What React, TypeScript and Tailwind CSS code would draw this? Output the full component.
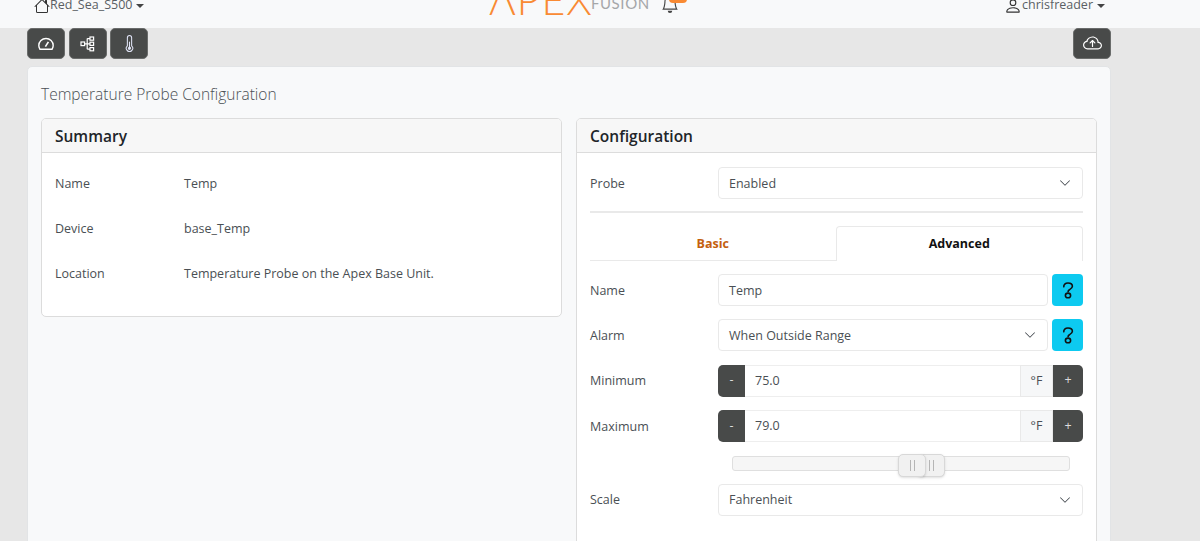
import React from 'react'
import { BsBell, BsChevronDown, BsCloudArrowUp, BsHouse, BsPerson, BsThermometerHalf } from 'react-icons/bs'

const font = { fontFamily: '"Open Sans", sans-serif' }

const DarkButton = ({ children }: { children: React.ReactNode }) => (
  <button className="flex h-[31px] w-[38px] items-center justify-center rounded-[5px] border border-[#6a6c6b] bg-[#484a49] text-white">
    {children}
  </button>
)

const Caret = () => <span className="ml-[4px] inline-block border-x-[4px] border-t-[4px] border-x-transparent border-t-[#444]" />

// dome gauge
const GaugeIcon = () => (
  <svg width="16" height="14" viewBox="0 0 16 14" fill="none" stroke="currentColor" strokeWidth="1.4">
    <path d="M2 12.3 C1.2 11 .8 9.8 .8 8.6 C.8 4.6 4 1.5 8 1.5 C12 1.5 15.2 4.6 15.2 8.6 C15.2 9.8 14.8 11 14 12.3 Z" strokeLinejoin="round" />
    <path d="M7.4 9.6 L10.4 4.8" strokeWidth="1.6" />
  </svg>
)

const TreeIcon = () => (
  <svg width="15" height="16" viewBox="0 0 15 16" fill="none" stroke="currentColor" strokeWidth="1.2">
    <rect x="1" y="6" width="3.6" height="3.6" />
    <rect x="10" y="1" width="3.6" height="3.2" />
    <rect x="10" y="6.2" width="3.6" height="3.2" />
    <rect x="10" y="11.6" width="3.6" height="3.2" />
    <path d="M4.6 7.8 H10 M7.2 2.6 V13.2 M7.2 2.6 H10 M7.2 13.2 H10" />
  </svg>
)

const HelpButton = () => (
  <button className="flex h-[32px] w-[31px] shrink-0 items-center justify-center rounded-[4px] bg-[#0dcaf0] text-[#111]">
    <svg width="12" height="17" viewBox="0 0 12 17" fill="none" stroke="currentColor" strokeWidth="1.6">
      <path d="M1.8 5.4 C1.4 2.4 3.4 1 6 1 C8.6 1 10.4 2.3 10.4 4.3 C10.4 6.2 8.8 7 7.4 7.8 C6.5 8.3 6 9 6 10.2" />
      <ellipse cx="6" cy="13.4" rx="2.6" ry="2.3" />
    </svg>
  </button>
)

const Select = ({ value, className }: { value: string; className?: string }) => (
  <div className={`flex h-[32px] items-center justify-between rounded-[4px] border border-[#e9e9e9] bg-white pl-[10px] pr-[11px] text-[12.5px] text-[#4a4f54] ${className ?? ''}`}>
    <span className="pt-[2px]">{value}</span>
    <BsChevronDown className="text-[12px] text-[#343a40]" />
  </div>
)

const Row = ({ label, children }: { label: string; children: React.ReactNode }) => (
  <div className="flex h-[32px] items-center">
    <span className="w-[128px] shrink-0 pt-[2px] text-[12.5px] text-[#4a4f54]">{label}</span>
    <div className="flex min-w-0 flex-1 gap-[4px]">{children}</div>
  </div>
)

const Stepper = ({ value }: { value: string }) => (
  <div className="flex h-[32px] flex-1 text-[12.5px] text-[#4a4f54]">
    <span className="flex w-[27px] items-center justify-center rounded-l-[5px] bg-[#484a49] text-[#ddd]">-</span>
    <span className="flex flex-1 items-center border-y border-[#eeeeee] bg-white pl-[10px] pt-px">{value}</span>
    <span className="flex w-[33px] items-center justify-center border border-[#e9e9e9] bg-[#f6f7f8] pt-px">°F</span>
    <span className="flex w-[30px] items-center justify-center rounded-r-[5px] bg-[#484a49] text-[#ddd]">+</span>
  </div>
)

const SummaryRow = ({ label, value }: { label: string; value: string }) => (
  <div className="flex h-[45px] items-center pt-[2px] text-[12.5px] text-[#4a4f54]">
    <span className="w-[129px] shrink-0">{label}</span>
    <span>{value}</span>
  </div>
)

const CardHeader = ({ title }: { title: string }) => (
  <div className="flex h-[34px] items-center border-b border-[#dcdcdc] bg-[#f7f7f7] px-[13px] pt-[2px] text-[15.5px] font-semibold text-[#212529]">
    {title}
  </div>
)

const SliderHandle = ({ className }: { className: string }) => (
  <span className={`absolute top-[-3px] flex h-[23px] w-[28px] items-center justify-center gap-[3px] rounded-[5px] border border-[#d8d8d8] bg-[#f1f1f1] shadow ${className}`}>
    <i className="h-[11px] w-px bg-[#b5b5b5]" />
    <i className="h-[11px] w-px bg-[#b5b5b5]" />
  </span>
)

export default function App() {
  return (
    <div className="h-[541px] w-[1200px] overflow-hidden bg-[#e7e7e7]" style={font}>
      <nav className="relative flex h-[28px] items-end overflow-hidden bg-[#f8f9fa] pb-[13px] text-[12.5px] text-[#5a5f64]">
        <div className="ml-[34px] flex items-center">
          <BsHouse className="text-[16px] text-[#333]" />
          <span>Red_Sea_S500</span>
          <Caret />
        </div>
        <div className="ml-auto mr-[95px] flex items-center">
          <BsPerson className="text-[18px] text-[#333]" />
          <span>chrisfreader</span>
          <Caret />
        </div>
        <div className="absolute bottom-[12px] left-[489px] flex items-end">
          <span className="text-[41px] leading-[32px] font-light tracking-[1px] text-[#f98a33]" style={{ fontFamily: 'Lato, sans-serif' }}>ΛPEX</span>
          <span className="mb-[5px] ml-[-2px] text-[15px] leading-[16px] tracking-[0.6px] text-[#a5a7a9]" style={{ fontFamily: 'Lato, sans-serif' }}>FUSION</span>
        </div>
        <div className="absolute bottom-[15px] left-[661px] text-[#444]">
          <BsBell className="text-[18px]" />
        </div>
        <span className="absolute left-[669px] top-[-7px] h-[10px] w-[18px] rounded-[4px] bg-[#f98a33]" />
      </nav>

      <div className="ml-[27px] w-[1084px]">
        <div className="flex gap-[3.5px]">
          <DarkButton><GaugeIcon /></DarkButton>
          <DarkButton><TreeIcon /></DarkButton>
          <DarkButton><BsThermometerHalf className="text-[17px] text-[#dfe3f5]" /></DarkButton>
          <div className="ml-auto">
            <DarkButton><BsCloudArrowUp className="text-[19px]" /></DarkButton>
          </div>
        </div>

        <main className="mt-[7px] h-[500px] rounded-[5px] border border-[#e2e4e6] bg-[#f8f9fa] px-[13px]">
          <h1 className="flex h-[51px] items-center pt-[5px] text-[15.5px] font-light text-[#4a4f54]">Temperature Probe Configuration</h1>
          <div className="flex items-start gap-[14px]">
            <section className="h-[199px] w-[521px] overflow-hidden rounded-[5px] border border-[#dcdcdc] bg-white">
              <CardHeader title="Summary" />
              <div className="px-[13px] pt-[8px]">
                <SummaryRow label="Name" value="Temp" />
                <SummaryRow label="Device" value="base_Temp" />
                <SummaryRow label="Location" value="Temperature Probe on the Apex Base Unit." />
              </div>
            </section>

            <section className="h-[460px] w-[521px] overflow-hidden rounded-[5px] border border-[#dcdcdc] bg-white">
              <CardHeader title="Configuration" />
              <div className="px-[13px] pt-[14px]">
                <Row label="Probe"><Select value="Enabled" className="flex-1" /></Row>
                <div className="mt-[12px] border-t-2 border-[#e9e9e9]" />
                <div className="mt-[13px] flex h-[35px] text-[12.5px] font-bold">
                  <span className="flex flex-1 items-center justify-center border-b border-[#e9e9e9] pt-[3px] text-[#c4600f]">Basic</span>
                  <span className="flex flex-1 items-center justify-center rounded-t-[4px] border border-b-0 border-[#e9e9e9] pt-[1px] text-[#111]">Advanced</span>
                </div>
                <div className="mt-[13px] flex flex-col gap-[13.4px]">
                  <Row label="Name">
                    <div className="flex h-[32px] flex-1 items-center rounded-[4px] border border-[#e9e9e9] pl-[10px] pt-[2px] text-[12.5px] text-[#4a4f54]">Temp</div>
                    <HelpButton />
                  </Row>
                  <Row label="Alarm">
                    <Select value="When Outside Range" className="flex-1" />
                    <HelpButton />
                  </Row>
                  <Row label="Minimum"><Stepper value="75.0" /></Row>
                  <Row label="Maximum"><Stepper value="79.0" /></Row>
                </div>
                <div className="relative ml-[142px] mt-[14px] h-[15px] w-[338px] rounded-[3px] border border-[#dfdfdf] bg-[#f6f6f6]">
                  <SliderHandle className="left-[184px]" />
                  <SliderHandle className="left-[165px] z-10" />
                </div>
                <div className="mt-[12.5px]">
                  <Row label="Scale"><Select value="Fahrenheit" className="flex-1" /></Row>
                </div>
              </div>
            </section>
          </div>
        </main>
      </div>
    </div>
  )
}
